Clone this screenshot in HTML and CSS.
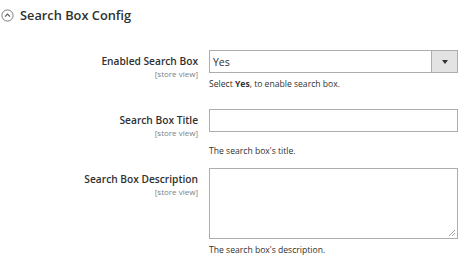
FILE: index.html
```html
<!DOCTYPE html>
<html>
<head>
<meta charset="utf-8">
<link rel="stylesheet" href="styles.css">
</head>
<body>
<div class="section">
  <div class="section-head">
    <svg class="toggle" width="13" height="13" viewBox="0 0 13 13">
      <circle cx="6.5" cy="6.5" r="5.6" fill="none" stroke="#7a7a7a" stroke-width="1"/>
      <path d="M4 7.6 L6.5 5.1 L9 7.6" fill="none" stroke="#555" stroke-width="1.1"/>
    </svg>
    <span class="section-title">Search Box Config</span>
  </div>
  <div class="form">
    <div class="row row-select">
      <div class="label">
        <span class="label-text">Enabled Search Box</span>
        <span class="scope">[store view]</span>
      </div>
      <div class="control">
        <div class="select">
          <span class="select-value">Yes</span>
          <span class="select-btn"><span class="arrow"></span></span>
        </div>
        <div class="note">Select <strong>Yes</strong>, to enable search box.</div>
      </div>
    </div>
    <div class="row row-input">
      <div class="label">
        <span class="label-text">Search Box Title</span>
        <span class="scope">[store view]</span>
      </div>
      <div class="control">
        <div class="input"></div>
        <div class="note note-input">The search box's title.</div>
      </div>
    </div>
    <div class="row row-area">
      <div class="label">
        <span class="label-text">Search Box Description</span>
        <span class="scope">[store view]</span>
      </div>
      <div class="control">
        <div class="textarea">
          <svg class="grip" width="8" height="8" viewBox="0 0 8 8">
            <path d="M7 1 L1 7 M7 4 L4 7" stroke="#999" stroke-width="0.9"/>
          </svg>
        </div>
        <div class="note">The search box's description.</div>
      </div>
    </div>
  </div>
</div>
</body>
</html>
```
FILE: styles.css
```css
html, body {
  margin: 0;
  padding: 0;
  background: #ffffff;
}
body {
  font-family: "Open Sans", "DejaVu Sans", sans-serif;
  color: #303030;
  width: 474px;
  height: 260px;
  overflow: hidden;
}
.section-head {
  display: flex;
  align-items: center;
  height: 20px;
  padding: 5px 0 0 1px;
  gap: 6px;
}
.toggle {
  display: block;
}
.section-title {
  font-size: 12.8px;
  font-weight: 600;
  color: #303030;
  line-height: 20px;
}
.form {
  padding-top: 25px;
}
.row {
  display: grid;
  grid-template-columns: 198px 249px;
  column-gap: 11px;
}
.row-select { margin-bottom: 18px; }
.row-input { margin-bottom: 10px; }
.label {
  display: flex;
  flex-direction: column;
  align-items: flex-end;
  padding-top: 4px;
}
.label-text {
  font-size: 10.2px;
  font-weight: 600;
  line-height: 15px;
  color: #303030;
}
.scope {
  font-size: 8px;
  line-height: 11px;
  color: #808080;
  margin-top: -1px;
}
.control {
  display: flex;
  flex-direction: column;
}
.select {
  height: 23px;
  box-sizing: border-box;
  border: 1px solid #adadad;
  display: flex;
  align-items: center;
  background: #fff;
}
.select-value {
  flex: 1;
  font-size: 10.5px;
  padding-left: 3px;
  color: #303030;
}
.select-btn {
  width: 25px;
  height: 100%;
  background: #e3e3e3;
  border-left: 1px solid #adadad;
  display: flex;
  align-items: center;
  justify-content: center;
}
.arrow {
  width: 0;
  height: 0;
  border-left: 3px solid transparent;
  border-right: 3px solid transparent;
  border-top: 4px solid #333;
}
.input {
  height: 23px;
  box-sizing: border-box;
  border: 1px solid #adadad;
  background: #fff;
}
.textarea {
  position: relative;
  height: 71px;
  box-sizing: border-box;
  border: 1px solid #adadad;
  background: #fff;
}
.grip {
  position: absolute;
  right: 1px;
  bottom: 1px;
}
.note {
  font-size: 8.6px;
  line-height: 13px;
  margin-top: 5px;
  color: #303030;
}
.note strong {
  font-weight: 700;
}
.note-input {
  margin-top: 13px;
}
```
